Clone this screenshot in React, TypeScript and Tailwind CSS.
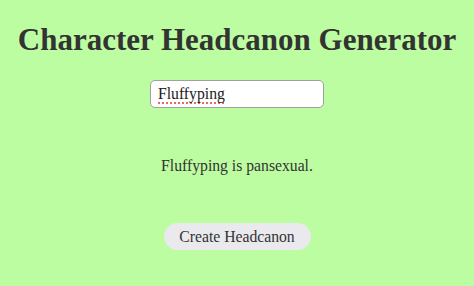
import React from "react";

export default function App() {
  return (
    <div className="w-[474px] h-[286px] bg-[#bdfda1] flex flex-col items-center text-[#333333] [font-family:'Liberation_Serif',serif]">
      <h1 className="mt-[22px] text-[31px] leading-[36px] font-bold">Character Headcanon Generator</h1>
      <div className="mt-[22px] w-[174px] h-[28px] bg-white border border-[#a0a0a0] rounded-[5px] flex items-center px-[7px] text-[15.7px] text-[#222]">
        <span className="underline decoration-dotted decoration-[#e0433a] underline-offset-[3px]">Fluffyping</span>
      </div>
      <p className="mt-[48px] text-[15.7px] leading-[20px]">Fluffyping is pansexual.</p>
      <button className="mt-[47px] w-[147px] h-[27px] rounded-full bg-[#e9e9ee] text-[15.7px] text-[#333]">Create Headcanon</button>
    </div>
  );
}
